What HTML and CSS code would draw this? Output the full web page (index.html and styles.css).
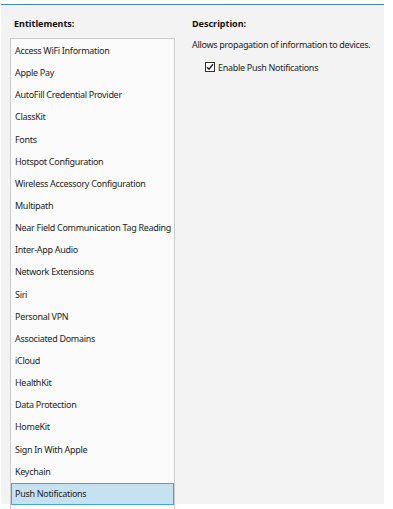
FILE: index.html
```html
<!DOCTYPE html>
<html>
<head>
<meta charset="utf-8">
<link rel="stylesheet" href="styles.css">
</head>
<body>
<div class="panel">
  <div class="left">
    <div class="heading">Entitlements:</div>
    <ul class="list">
      <li>Access WiFi Information</li>
      <li>Apple Pay</li>
      <li>AutoFill Credential Provider</li>
      <li>ClassKit</li>
      <li>Fonts</li>
      <li>Hotspot Configuration</li>
      <li>Wireless Accessory Configuration</li>
      <li>Multipath</li>
      <li>Near Field Communication Tag Reading</li>
      <li>Inter-App Audio</li>
      <li>Network Extensions</li>
      <li>Siri</li>
      <li>Personal VPN</li>
      <li>Associated Domains</li>
      <li>iCloud</li>
      <li>HealthKit</li>
      <li>Data Protection</li>
      <li>HomeKit</li>
      <li>Sign In With Apple</li>
      <li>Keychain</li>
      <li class="selected">Push Notifications</li>
    </ul>
  </div>
  <div class="right">
    <div class="heading">Description:</div>
    <p class="desc">Allows propagation of information to devices.</p>
    <label class="check">
      <span class="box"><svg width="8" height="8" viewBox="0 0 8 8"><path d="M1 4.2 L3 6.3 L7 1.2" fill="none" stroke="#222" stroke-width="1.4"/></svg></span>
      <span>Enable Push Notifications</span>
    </label>
  </div>
</div>
</body>
</html>
```
FILE: styles.css
```css
html, body {
  margin: 0;
  padding: 0;
  background: #ffffff;
  overflow: hidden;
}
body {
  width: 393px;
  height: 509px;
  font-family: "Noto Sans", "Open Sans", sans-serif;
  font-size: 9px;
  letter-spacing: -0.3px;
  color: #1e1e1e;
}
.panel {
  margin: 4px 0 0 1px;
  width: 383px;
  height: 500px;
  background: #f3f3f3;
  border-top: 1px solid #3c8ad2;
  display: flex;
  gap: 17px;
  padding: 12px 0 0 9px;
  box-sizing: border-box;
}
.left {
  width: 165px;
  flex: none;
  display: flex;
  flex-direction: column;
}
.heading {
  font-weight: bold;
  letter-spacing: 0;
  height: 14px;
  line-height: 14px;
  margin: 0 0 7px 4px;
  color: #111;
}
.right .heading {
  margin-left: 0;
}
.list {
  list-style: none;
  margin: 0;
  padding: 1px 0 0 0;
  border: 1px solid #cccccc;
  background: #fbfbfb;
  height: 480px;
  flex: none;
}
.list li {
  height: 22.15px;
  line-height: 22.15px;
  padding-left: 4px;
  box-sizing: border-box;
  white-space: nowrap;
}
.list li.selected {
  background: #c6e1f0;
  border: 1px solid #3fa6e0;
  padding-left: 3px;
  line-height: 20.15px;
}
.right {
  display: flex;
  flex-direction: column;
  flex: 1;
}
.desc {
  margin: 0 0 8px 0;
  height: 14px;
  line-height: 14px;
  white-space: nowrap;
}
.check {
  display: flex;
  align-items: center;
  gap: 3px;
  margin-left: 13px;
  height: 14px;
}
.check .box {
  width: 10px;
  height: 10px;
  box-sizing: border-box;
  border: 1px solid #333;
  background: #fff;
  display: flex;
  align-items: center;
  justify-content: center;
}
.check svg {
  display: block;
}
```
